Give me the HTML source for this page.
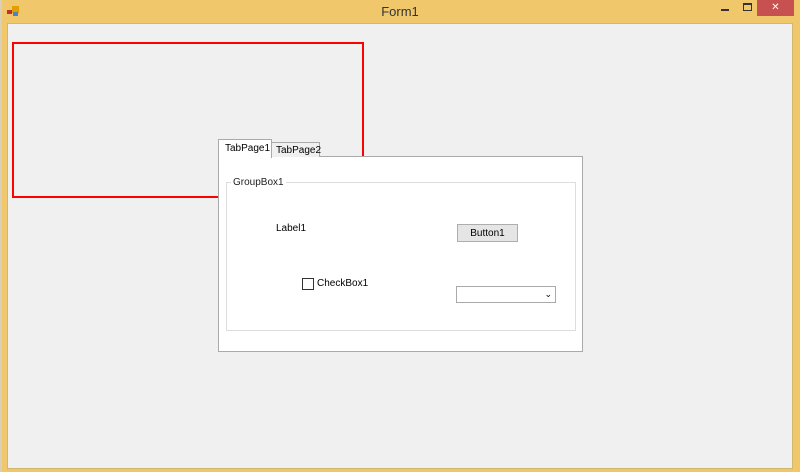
<!DOCTYPE html>
<html><head><style>
body{margin:0;width:800px;height:472px;background:#f0c86b;position:relative;overflow:hidden;font-family:"Liberation Sans",sans-serif;font-size:10px;color:#000}
div{position:absolute;box-sizing:border-box}
</style></head><body>
<div style="left:0;top:0;width:2px;height:472px;background:#d8d0b8"></div>
<div style="left:12px;top:6px;width:7px;height:7px;background:#e0a000"></div>
<div style="left:7px;top:10px;width:5px;height:4px;background:#c03030"></div>
<div style="left:13px;top:12px;width:5px;height:4px;background:#4a80d0"></div>
<div style="left:0;top:4px;width:800px;text-align:center;font-size:13px;color:#333">Form1</div>
<div style="left:721px;top:9px;width:8px;height:2px;background:#333"></div>
<div style="left:743px;top:3px;width:9px;height:8px;border:1px solid #333;border-top-width:2px"></div>
<div style="left:757px;top:0;width:37px;height:16px;background:#c75050;color:#fff;text-align:center;font-size:10px;line-height:15px">✕</div>
<div style="left:7px;top:23px;width:786px;height:446px;background:#f0f0f0;border:1px solid #d0b870"></div>
<div style="left:12px;top:42px;width:352px;height:156px;border:2px solid #f00"></div>
<div style="left:218px;top:156px;width:365px;height:196px;background:#fff;border:1px solid #aaa"></div>
<div style="left:271px;top:142px;width:49px;height:15px;background:#f0f0f0;border:1px solid #aaa;border-bottom:none;padding:2px 0 0 4px">TabPage2</div>
<div style="left:218px;top:139px;width:54px;height:19px;background:#fff;border:1px solid #aaa;border-bottom:none;padding:3px 0 0 6px">TabPage1</div>
<div style="left:226px;top:182px;width:350px;height:149px;border:1px solid #ddd"></div>
<div style="left:231px;top:177px;background:#fff;padding:0 2px;color:#222">GroupBox1</div>
<div style="left:276px;top:223px">Label1</div>
<div style="left:457px;top:224px;width:61px;height:18px;background:#e5e5e5;border:1px solid #adadad;text-align:center;line-height:17px">Button1</div>
<div style="left:302px;top:278px;width:12px;height:12px;border:1px solid #333;background:#fff"></div>
<div style="left:317px;top:278px">CheckBox1</div>
<div style="left:456px;top:286px;width:100px;height:17px;background:#fff;border:1px solid #aaa;text-align:right;padding-right:3px;font-size:9px;line-height:15px">⌄</div>
</body></html>
